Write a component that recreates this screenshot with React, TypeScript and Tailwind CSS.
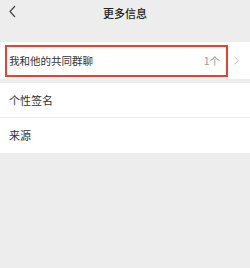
import React from 'react';

const font = { fontFamily: '"Noto Sans CJK SC", "Noto Sans", sans-serif' };

export default function App() {
  return (
    <div className="w-[250px] h-[268px] bg-[#ededed] flex flex-col" style={font}>
      {/* Top bar */}
      <div className="relative h-[42px] flex items-start justify-center pt-[5px]">
        <svg className="absolute left-[8px] top-[5px]" width="9" height="13" viewBox="0 0 9 13">
          <path d="M7 1 L2 6.5 L7 12" fill="none" stroke="#444" strokeWidth="1.2" />
        </svg>
        <span className="text-[11px] leading-[16px] font-medium text-[#222]">更多信息</span>
      </div>

      {/* Common groups row, highlighted */}
      <div className="h-[37px] bg-white flex items-center pl-[5px] pr-[11px]">
        <div className="flex-1 h-[32px] border-[2.5px] border-[#e8412c] flex items-center justify-between pl-[2px] pr-[6px]">
          <span className="text-[10.5px] text-[#333]">我和他的共同群聊</span>
          <span className="text-[10.5px] text-[#999]">1个</span>
        </div>
        <svg className="ml-[6px]" width="5" height="9" viewBox="0 0 5 9">
          <path d="M0.5 0.5 L4.2 4.5 L0.5 8.5" fill="none" stroke="#c4c4c4" strokeWidth="1" />
        </svg>
      </div>

      <div className="h-[4px]" />

      <div className="bg-white flex flex-col">
        <div className="h-[35px] flex items-center pl-[9px] border-b border-[#eeeeee]">
          <span className="text-[11px] text-[#333]">个性签名</span>
        </div>
        <div className="h-[35px] flex items-center pl-[9px]">
          <span className="text-[11px] text-[#333]">来源</span>
        </div>
      </div>
    </div>
  );
}
